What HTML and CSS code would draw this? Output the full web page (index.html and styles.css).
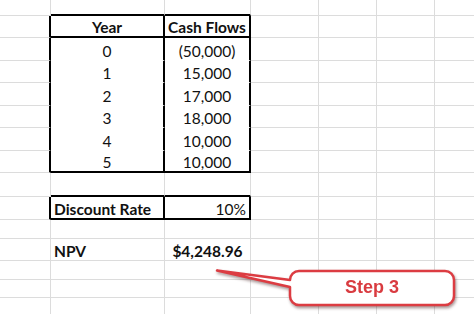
FILE: index.html
```html
<!DOCTYPE html>
<html>
<head>
<meta charset="utf-8">
<link rel="stylesheet" href="styles.css">
</head>
<body>
<div class="sheet">
  <div class="row"><div class="c"></div><div class="c tt"></div><div class="c tt"></div><div class="c"></div><div class="c"></div><div class="c"></div><div class="c"></div></div>
  <div class="row"><div class="c el"></div><div class="c hd">Year</div><div class="c hd">Cash Flows</div><div class="c"></div><div class="c"></div><div class="c"></div><div class="c"></div></div>
  <div class="row"><div class="c el"></div><div class="c bd">0</div><div class="c bd">(50,000)</div><div class="c"></div><div class="c"></div><div class="c"></div><div class="c"></div></div>
  <div class="row"><div class="c el"></div><div class="c bd">1</div><div class="c bd">15,000</div><div class="c"></div><div class="c"></div><div class="c"></div><div class="c"></div></div>
  <div class="row"><div class="c el"></div><div class="c bd">2</div><div class="c bd">17,000</div><div class="c"></div><div class="c"></div><div class="c"></div><div class="c"></div></div>
  <div class="row"><div class="c el"></div><div class="c bd">3</div><div class="c bd">18,000</div><div class="c"></div><div class="c"></div><div class="c"></div><div class="c"></div></div>
  <div class="row"><div class="c el"></div><div class="c bd">4</div><div class="c bd">10,000</div><div class="c"></div><div class="c"></div><div class="c"></div><div class="c"></div></div>
  <div class="row"><div class="c el"></div><div class="c bt">5</div><div class="c bt">10,000</div><div class="c"></div><div class="c"></div><div class="c"></div><div class="c"></div></div>
  <div class="row"><div class="c"></div><div class="c tt"></div><div class="c tt"></div><div class="c"></div><div class="c"></div><div class="c"></div><div class="c"></div></div>
  <div class="row"><div class="c el"></div><div class="c bt left b">Discount Rate</div><div class="c bt right">10%</div><div class="c"></div><div class="c"></div><div class="c"></div><div class="c"></div></div>
  <div class="row"><div class="c"></div><div class="c"></div><div class="c"></div><div class="c"></div><div class="c"></div><div class="c"></div><div class="c"></div></div>
  <div class="row"><div class="c"></div><div class="c left b">NPV</div><div class="c b">$4,248.96</div><div class="c"></div><div class="c"></div><div class="c"></div><div class="c"></div></div>
  <div class="row"><div class="c"></div><div class="c"></div><div class="c"></div><div class="c"></div><div class="c"></div><div class="c"></div><div class="c"></div></div>
  <div class="row"><div class="c"></div><div class="c"></div><div class="c"></div><div class="c"></div><div class="c"></div><div class="c"></div><div class="c"></div></div>
  <div class="row last-row"><div class="c"></div><div class="c"></div><div class="c"></div><div class="c"></div><div class="c"></div><div class="c"></div><div class="c"></div></div>

  <div class="callout">
    <svg width="264" height="54" viewBox="0 0 264 54">
      <path class="callout-shape" d="M89 11 H235 A9 9 0 0 1 244 20 V36 A9 9 0 0 1 235 45 H89 A9 9 0 0 1 80 36 V27 L7 10.5 L80 20 A9 9 0 0 1 89 11 Z"/>
      <text class="callout-text" x="162" y="33" text-anchor="middle">Step 3</text>
    </svg>
  </div>
</div>
</body>
</html>
```
FILE: styles.css
```css
* { box-sizing: border-box; }

body {
  margin: 0;
  background: #fff;
  font-family: Lato, "Open Sans", sans-serif;
  font-size: 15.5px;
  color: #111;
}

.sheet {
  position: relative;
  width: 474px;
  height: 314px;
  overflow: hidden;
  display: grid;
  grid-template-columns: 51px 114px 86px 68px 58px 58px 39px;
  grid-template-rows: 16px 22px 23px 22px 23px 22px 23px 22px 24px 23px 19px 22px 19px 18px 16px;
}

.row { display: contents; }

.c {
  border-right: 1px solid #dcdcdc;
  border-bottom: 1px solid #dcdcdc;
  display: flex;
  align-items: flex-end;
  justify-content: center;
  line-height: 18px;
  white-space: nowrap;
}

.row > .c:last-child { border-right: none; }
.last-row > .c { border-bottom: none; }

.tt { border-bottom: 2px solid #000; }
.el { border-right: 2px solid #000; }

.hd {
  border-right: 2px solid #000;
  border-bottom: 2px solid #000;
  font-weight: 700;
}

.bd {
  border-right: 2px solid #000;
  border-bottom-color: #fff;
}

.bt {
  border-right: 2px solid #000;
  border-bottom: 2px solid #000;
}

.left { justify-content: flex-start; padding-left: 3px; }
.right { justify-content: flex-end; padding-right: 3px; }
.b { font-weight: 700; }

.callout {
  position: absolute;
  left: 210px;
  top: 260px;
  width: 264px;
  height: 54px;
}

.callout svg {
  display: block;
  overflow: visible;
  filter: drop-shadow(1px 2px 1.5px rgba(60, 20, 20, 0.45));
}

.callout-shape {
  fill: #fff;
  stroke: #dc3c42;
  stroke-width: 2.5;
  stroke-linejoin: round;
}

.callout-text {
  font-family: "Liberation Sans", Arial, sans-serif;
  font-weight: 700;
  font-size: 18px;
  fill: #d93b40;
}
```
